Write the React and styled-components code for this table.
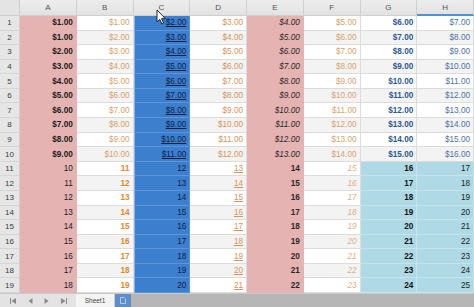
import React from "react";
import styled, { createGlobalStyle } from "styled-components";

const GlobalStyle = createGlobalStyle`
  html, body {
    margin: 0;
    padding: 0;
    background: #ffffff;
  }
  body {
    font-family: "Liberation Sans", Arial, sans-serif;
    width: 474px;
    height: 307px;
    overflow: hidden;
  }
`;

const Wrapper = styled.div`
  position: relative;
  width: 474px;
  height: 307px;
  display: flex;
  flex-direction: column;
`;

const Sheet = styled.div`
  display: grid;
  grid-template-columns: 20px repeat(8, 1fr);
  grid-template-rows: 16px repeat(19, 1fr);
  height: 294px;
  background: #ffffff;
`;

const Corner = styled.div`
  background: #e4e4e4;
  border-right: 1px solid #cfcfcf;
  border-bottom: 1px solid #cfcfcf;
`;

const ColHead = styled.div`
  background: linear-gradient(#ededed, #e2e2e2);
  border-right: 1px solid #d0d0d0;
  border-bottom: ${(p) => (p.$active ? "2px solid #4b95d6" : "1px solid #cfcfcf")};
  display: flex;
  align-items: center;
  justify-content: center;
  font-size: 8px;
  color: #555;
`;

const RowHead = styled.div`
  background: #e6e6e6;
  border-right: 1px solid #cfcfcf;
  border-bottom: 1px solid #d6d6d6;
  display: flex;
  align-items: center;
  justify-content: center;
  font-size: 8px;
  color: #3c3c3c;
`;

const Cell = styled.div`
  background: ${(p) => p.$bg};
  border-right: 1px solid ${(p) => p.$line};
  border-bottom: 1px solid ${(p) => p.$line};
  border-left: ${(p) => (p.$edge ? `1px solid ${p.$edge}` : "none")};
  display: flex;
  align-items: center;
  justify-content: flex-end;
  padding-right: 3px;
  font-size: 8.2px;
  color: ${(p) => p.$color};
  font-weight: ${(p) => (p.$bold ? 700 : 400)};
  font-style: ${(p) => (p.$italic ? "italic" : "normal")};
  text-decoration: ${(p) => (p.$underline ? "underline" : "none")};
  overflow: hidden;
  white-space: nowrap;
`;

const TabBar = styled.div`
  display: flex;
  height: 13px;
  background: #b6b6b6;
  border-top: 1px solid #c9c9c9;
`;

const NavArea = styled.div`
  width: 76px;
  display: flex;
  align-items: center;
  justify-content: space-around;
  background: #e3e3e3;
  padding: 0 4px;
  box-sizing: border-box;
`;

const NavBtn = styled.span`
  display: flex;
  align-items: center;
  color: #8a8a8a;
`;

const SheetTab = styled.div`
  width: 38px;
  background: #f4f4f4;
  display: flex;
  align-items: center;
  justify-content: center;
  font-size: 6.5px;
  color: #444;
  border-right: 1px solid #d0d0d0;
`;

const AddTab = styled.div`
  width: 16px;
  background: #5f8fca;
  display: flex;
  align-items: center;
  justify-content: center;
`;

const Pointer = styled.svg`
  position: absolute;
  left: 156px;
  top: 9px;
`;

const COLS = ["A", "B", "C", "D", "E", "F", "G", "H"];

const WHITE = "#ffffff";
const ZEBRA = "#f3f3f3";
const GRID = "#dcdcdc";

function cellValue(ci, row) {
  const n = ci === 0 ? (row === 1 ? 1 : row - 1) : row + ci - 1;
  return row <= 10 ? `$${n}.00` : `${n}`;
}

function cellStyle(ci, row) {
  const money = row <= 10;
  const plain = row % 2 === 1 ? WHITE : ZEBRA;
  switch (ci) {
    case 0:
      return { $bg: "#e6b3b3", $line: "#e6b3b3", $color: "#1c1c1c", $bold: money };
    case 1:
      return money
        ? { $bg: plain, $line: GRID, $color: "#d9a26c" }
        : { $bg: plain, $line: GRID, $color: "#e0892c", $bold: true };
    case 2:
      return {
        $bg: "#3c7fcf",
        $line: "#5b95d8",
        $edge: "#8db6e6",
        $color: "#0f2040",
        $underline: money,
      };
    case 3:
      return { $bg: plain, $line: GRID, $color: "#d5955a", $underline: !money };
    case 4:
      return { $bg: "#e6b3b3", $line: "#e6b3b3", $color: "#2a2a2a", $italic: money, $bold: !money };
    case 5:
      return money
        ? { $bg: plain, $line: GRID, $color: "#d9a26c" }
        : { $bg: plain, $line: GRID, $color: "#e3b07c", $italic: true };
    case 6:
      return money
        ? { $bg: plain, $line: GRID, $color: "#2b5893", $bold: true }
        : { $bg: "#afdae5", $line: "#c5e4ec", $color: "#111", $bold: true };
    default:
      return money
        ? { $bg: plain, $line: GRID, $color: "#4d72a6" }
        : { $bg: "#afdae5", $line: "#c5e4ec", $color: "#222" };
  }
}

const FirstIcon = () => (
  <svg width="7" height="6" viewBox="0 0 7 6">
    <rect x="0" y="0" width="1" height="6" fill="currentColor" />
    <path d="M6 0 L1.5 3 L6 6 Z" fill="currentColor" />
  </svg>
);

const PrevIcon = () => (
  <svg width="5" height="6" viewBox="0 0 5 6">
    <path d="M4.5 0 L0.5 3 L4.5 6 Z" fill="currentColor" />
  </svg>
);

const NextIcon = () => (
  <svg width="5" height="6" viewBox="0 0 5 6">
    <path d="M0.5 0 L4.5 3 L0.5 6 Z" fill="currentColor" />
  </svg>
);

const LastIcon = () => (
  <svg width="7" height="6" viewBox="0 0 7 6">
    <path d="M1 0 L5.5 3 L1 6 Z" fill="currentColor" />
    <rect x="6" y="0" width="1" height="6" fill="currentColor" />
  </svg>
);

export default function App() {
  const rows = Array.from({ length: 19 }, (_, i) => i + 1);

  return (
    <Wrapper>
      <GlobalStyle />
      <Sheet>
        <Corner />
        {COLS.map((c) => (
          <ColHead key={c} $active={c === "H"}>
            {c}
          </ColHead>
        ))}
        {rows.map((r) => (
          <React.Fragment key={r}>
            <RowHead>{r}</RowHead>
            {COLS.map((c, ci) => (
              <Cell key={c} {...cellStyle(ci, r)}>
                {cellValue(ci, r)}
              </Cell>
            ))}
          </React.Fragment>
        ))}
      </Sheet>

      <TabBar>
        <NavArea>
          <NavBtn><FirstIcon /></NavBtn>
          <NavBtn><PrevIcon /></NavBtn>
          <NavBtn><NextIcon /></NavBtn>
          <NavBtn><LastIcon /></NavBtn>
        </NavArea>
        <SheetTab>Sheet1</SheetTab>
        <AddTab>
          <svg width="6" height="7" viewBox="0 0 6 7">
            <path d="M0.5 0.5 H4 L5.5 2 V6.5 H0.5 Z" fill="none" stroke="#c8d8ee" strokeWidth="0.8" />
          </svg>
        </AddTab>
      </TabBar>

      <Pointer width="11" height="16" viewBox="0 0 11 16">
        <path
          d="M1 1 L1 13 L3.8 10.4 L5.8 15 L7.6 14.2 L5.6 9.7 L9.4 9.7 Z"
          fill="#ffffff"
          stroke="#111"
          strokeWidth="0.9"
          strokeLinejoin="round"
        />
      </Pointer>
    </Wrapper>
  );
}
